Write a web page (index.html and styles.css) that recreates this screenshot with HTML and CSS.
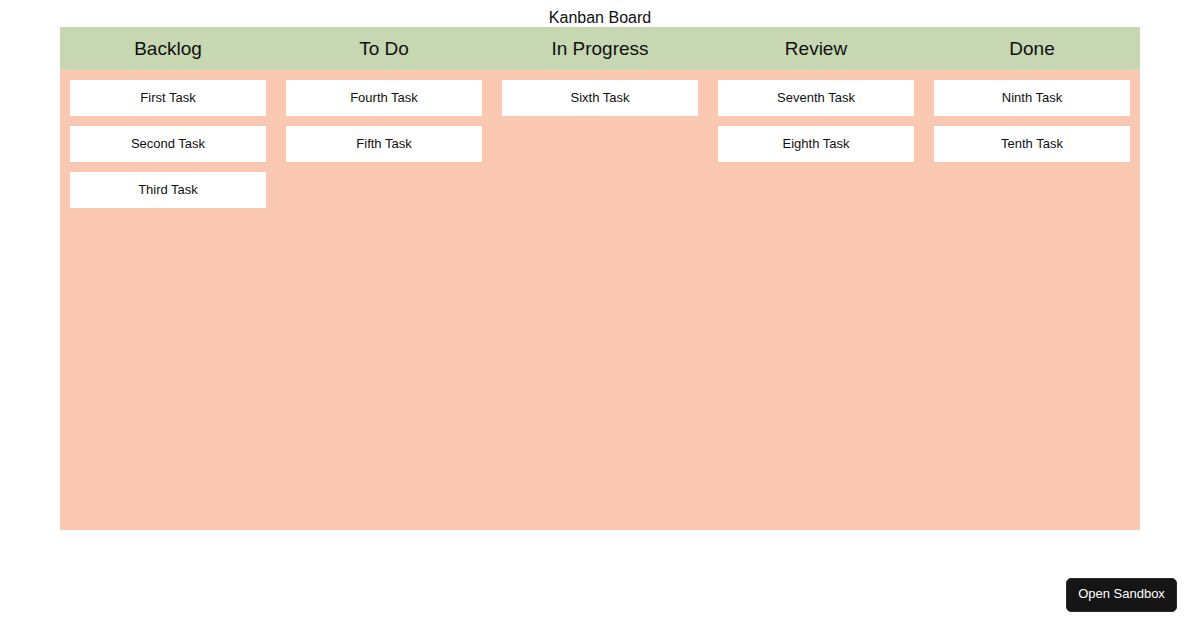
FILE: index.html
```html
<!DOCTYPE html>
<html>
<head>
<meta charset="utf-8">
<link rel="stylesheet" href="styles.css">
</head>
<body>
<div class="title">Kanban Board</div>
<div class="board">
  <div class="column">
    <div class="col-head">Backlog</div>
    <div class="col-body">
      <div class="card">First Task</div>
      <div class="card">Second Task</div>
      <div class="card">Third Task</div>
    </div>
  </div>
  <div class="column">
    <div class="col-head">To Do</div>
    <div class="col-body">
      <div class="card">Fourth Task</div>
      <div class="card">Fifth Task</div>
    </div>
  </div>
  <div class="column">
    <div class="col-head">In Progress</div>
    <div class="col-body">
      <div class="card">Sixth Task</div>
    </div>
  </div>
  <div class="column">
    <div class="col-head">Review</div>
    <div class="col-body">
      <div class="card">Seventh Task</div>
      <div class="card">Eighth Task</div>
    </div>
  </div>
  <div class="column">
    <div class="col-head">Done</div>
    <div class="col-body">
      <div class="card">Ninth Task</div>
      <div class="card">Tenth Task</div>
    </div>
  </div>
</div>
<button class="sandbox">Open Sandbox</button>
</body>
</html>
```
FILE: styles.css
```css
html, body {
  margin: 0;
  padding: 0;
  background: #fff;
  font-family: "Liberation Sans", Arial, sans-serif;
  color: #111;
}
.title {
  text-align: center;
  font-size: 16px;
  line-height: 19px;
  padding-top: 8px;
  height: 19px;
}
.board {
  margin: 0 60px;
  display: grid;
  grid-template-columns: repeat(5, 1fr);
  background: #fbc8b2;
  height: 503px;
}
.column {
  display: flex;
  flex-direction: column;
}
.col-head {
  background: #c6d7b1;
  height: 43px;
  line-height: 43px;
  text-align: center;
  font-size: 19px;
}
.col-body {
  padding: 10px;
  display: flex;
  flex-direction: column;
  gap: 10px;
}
.card {
  background: #fff;
  height: 36px;
  line-height: 36px;
  text-align: center;
  font-size: 13px;
}
.sandbox {
  position: fixed;
  right: 23px;
  bottom: 18px;
  width: 111px;
  height: 34px;
  background: #151515;
  color: #fff;
  border: 1px solid #2a2a2a;
  border-radius: 5px;
  font-family: "Liberation Sans", Arial, sans-serif;
  font-size: 13px;
  line-height: 30px;
  padding: 0 0 2px 0;
}
```
